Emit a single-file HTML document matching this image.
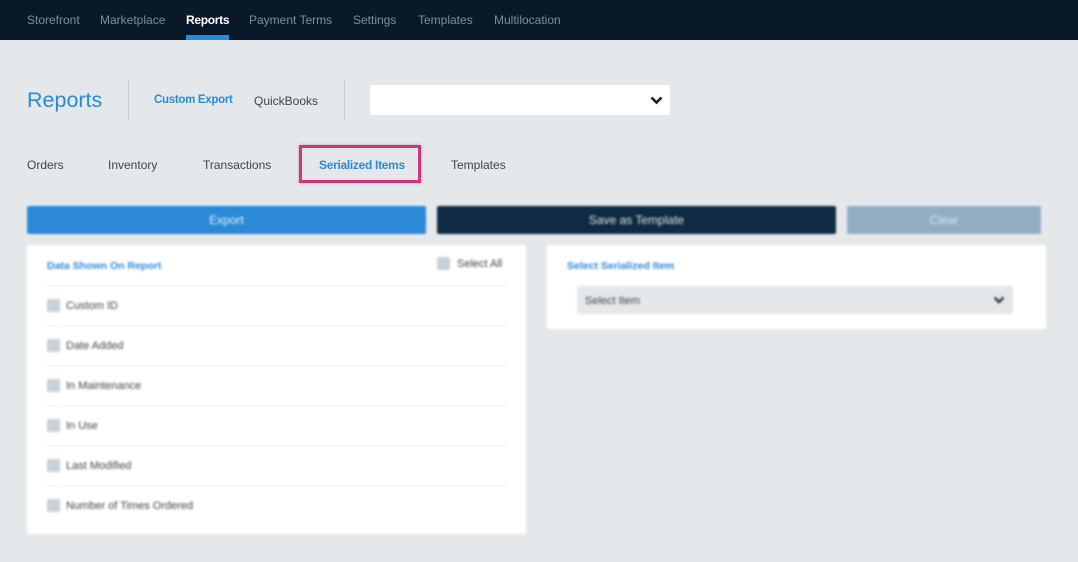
<!DOCTYPE html><html><head><style>
*{margin:0;padding:0;box-sizing:border-box}
body{width:1078px;height:562px;background:#e4e8ea;font-family:"Liberation Sans",sans-serif;position:relative;overflow:hidden}
.a{position:absolute;white-space:nowrap}
.nav{left:0;top:0;width:1078px;height:40px;background:#0a1929}
.ni{top:13px;font-size:12px;color:#7f8c99}
.blur{position:absolute;left:0;top:195px;width:1078px;height:367px;filter:blur(1px)}
.cb{position:absolute;width:13px;height:13px;background:#c9d1d8;border-radius:2px}
.row{font-size:11px;color:#444}
.ln{height:1px;background:#e3e9ee;width:460px;left:47px}
</style></head><body>
<div class="a nav"></div>
<div class="a ni" style="left:27px">Storefront</div>
<div class="a ni" style="left:100px">Marketplace</div>
<div class="a ni" style="left:186px;color:#fff;font-weight:bold;letter-spacing:-0.3px">Reports</div>
<div class="a" style="left:186px;top:35px;width:43px;height:5px;background:#2a8ad8"></div>
<div class="a ni" style="left:249px">Payment Terms</div>
<div class="a ni" style="left:353px">Settings</div>
<div class="a ni" style="left:418px">Templates</div>
<div class="a ni" style="left:494px">Multilocation</div>
<div class="a" style="left:27px;top:88px;font-size:21.5px;color:#2a8ad8">Reports</div>
<div class="a" style="left:128px;top:80px;width:1px;height:40px;background:#c8d0d6"></div>
<div class="a" style="left:154px;top:94px;font-size:11.5px;color:#2a8ad8;font-weight:bold;letter-spacing:-0.3px">Custom Export</div>
<div class="a" style="left:254px;top:94px;font-size:12px;color:#444">QuickBooks</div>
<div class="a" style="left:344px;top:80px;width:1px;height:40px;background:#c8d0d6"></div>
<div class="a" style="left:370px;top:85px;width:300px;height:30px;background:#fff;border-radius:2px"></div>
<svg class="a" style="left:650px;top:96px" width="13" height="9" viewBox="0 0 13 9"><path d="M1.5 1.5L6.5 6.5L11.5 1.5" stroke="#0f2233" stroke-width="2.6" fill="none"/></svg>
<div class="a" style="left:27px;top:158px;font-size:12px;color:#444">Orders</div>
<div class="a" style="left:108px;top:158px;font-size:12px;color:#444">Inventory</div>
<div class="a" style="left:203px;top:158px;font-size:12px;color:#444">Transactions</div>
<div class="a" style="left:299px;top:145px;width:122px;height:38px;border:3px solid #d0347d;box-shadow:0 0 3px rgba(0,0,0,.25)"></div>
<div class="a" style="left:319px;top:158px;font-size:12px;color:#2a8ad8;font-weight:bold;letter-spacing:-0.3px">Serialized Items</div>
<div class="a" style="left:451px;top:158px;font-size:12px;color:#444">Templates</div>
<div class="blur">
<div class="a" style="left:27px;top:11px;width:399px;height:28px;background:#2a8ad8;border-radius:2px;color:#e8f2fb;font-size:12px;text-align:center;line-height:28px">Export</div>
<div class="a" style="left:437px;top:11px;width:399px;height:28px;background:#0f2a44;border-radius:2px;color:#dfe6ec;font-size:12px;text-align:center;line-height:28px">Save as Template</div>
<div class="a" style="left:847px;top:11px;width:194px;height:28px;background:#93adc4;border-radius:2px;color:#d9e3ec;font-size:12px;text-align:center;line-height:28px">Clear</div>
<div class="a" style="left:27px;top:50px;width:499px;height:289px;background:#fff"></div>
<div class="a" style="left:47px;top:65px;font-size:10.5px;font-weight:bold;color:#2a8ad8">Data Shown On Report</div>
<div class="cb" style="left:437px;top:62px"></div>
<div class="a row" style="left:457px;top:63px">Select All</div>
<div class="a ln" style="top:90px"></div>
<div class="cb" style="left:47px;top:104px"></div><div class="a row" style="left:66px;top:105px">Custom ID</div>
<div class="a ln" style="top:130px"></div>
<div class="cb" style="left:47px;top:144px"></div><div class="a row" style="left:66px;top:145px">Date Added</div>
<div class="a ln" style="top:170px"></div>
<div class="cb" style="left:47px;top:184px"></div><div class="a row" style="left:66px;top:185px">In Maintenance</div>
<div class="a ln" style="top:210px"></div>
<div class="cb" style="left:47px;top:224px"></div><div class="a row" style="left:66px;top:225px">In Use</div>
<div class="a ln" style="top:250px"></div>
<div class="cb" style="left:47px;top:264px"></div><div class="a row" style="left:66px;top:265px">Last Modified</div>
<div class="a ln" style="top:290px"></div>
<div class="cb" style="left:47px;top:304px"></div><div class="a row" style="left:66px;top:305px">Number of Times Ordered</div>
<div class="a" style="left:547px;top:50px;width:499px;height:84px;background:#fff"></div>
<div class="a" style="left:567px;top:65px;font-size:10.5px;font-weight:bold;color:#2a8ad8">Select Serialized Item</div>
<div class="a" style="left:577px;top:91px;width:436px;height:28px;background:#e4e8eb"></div>
<div class="a row" style="left:585px;top:100px">Select Item</div>
<svg class="a" style="left:993px;top:101px" width="12" height="8" viewBox="0 0 12 8"><path d="M1.5 1.5L6 6L10.5 1.5" stroke="#333" stroke-width="2.4" fill="none"/></svg>
</div>
</body></html>
